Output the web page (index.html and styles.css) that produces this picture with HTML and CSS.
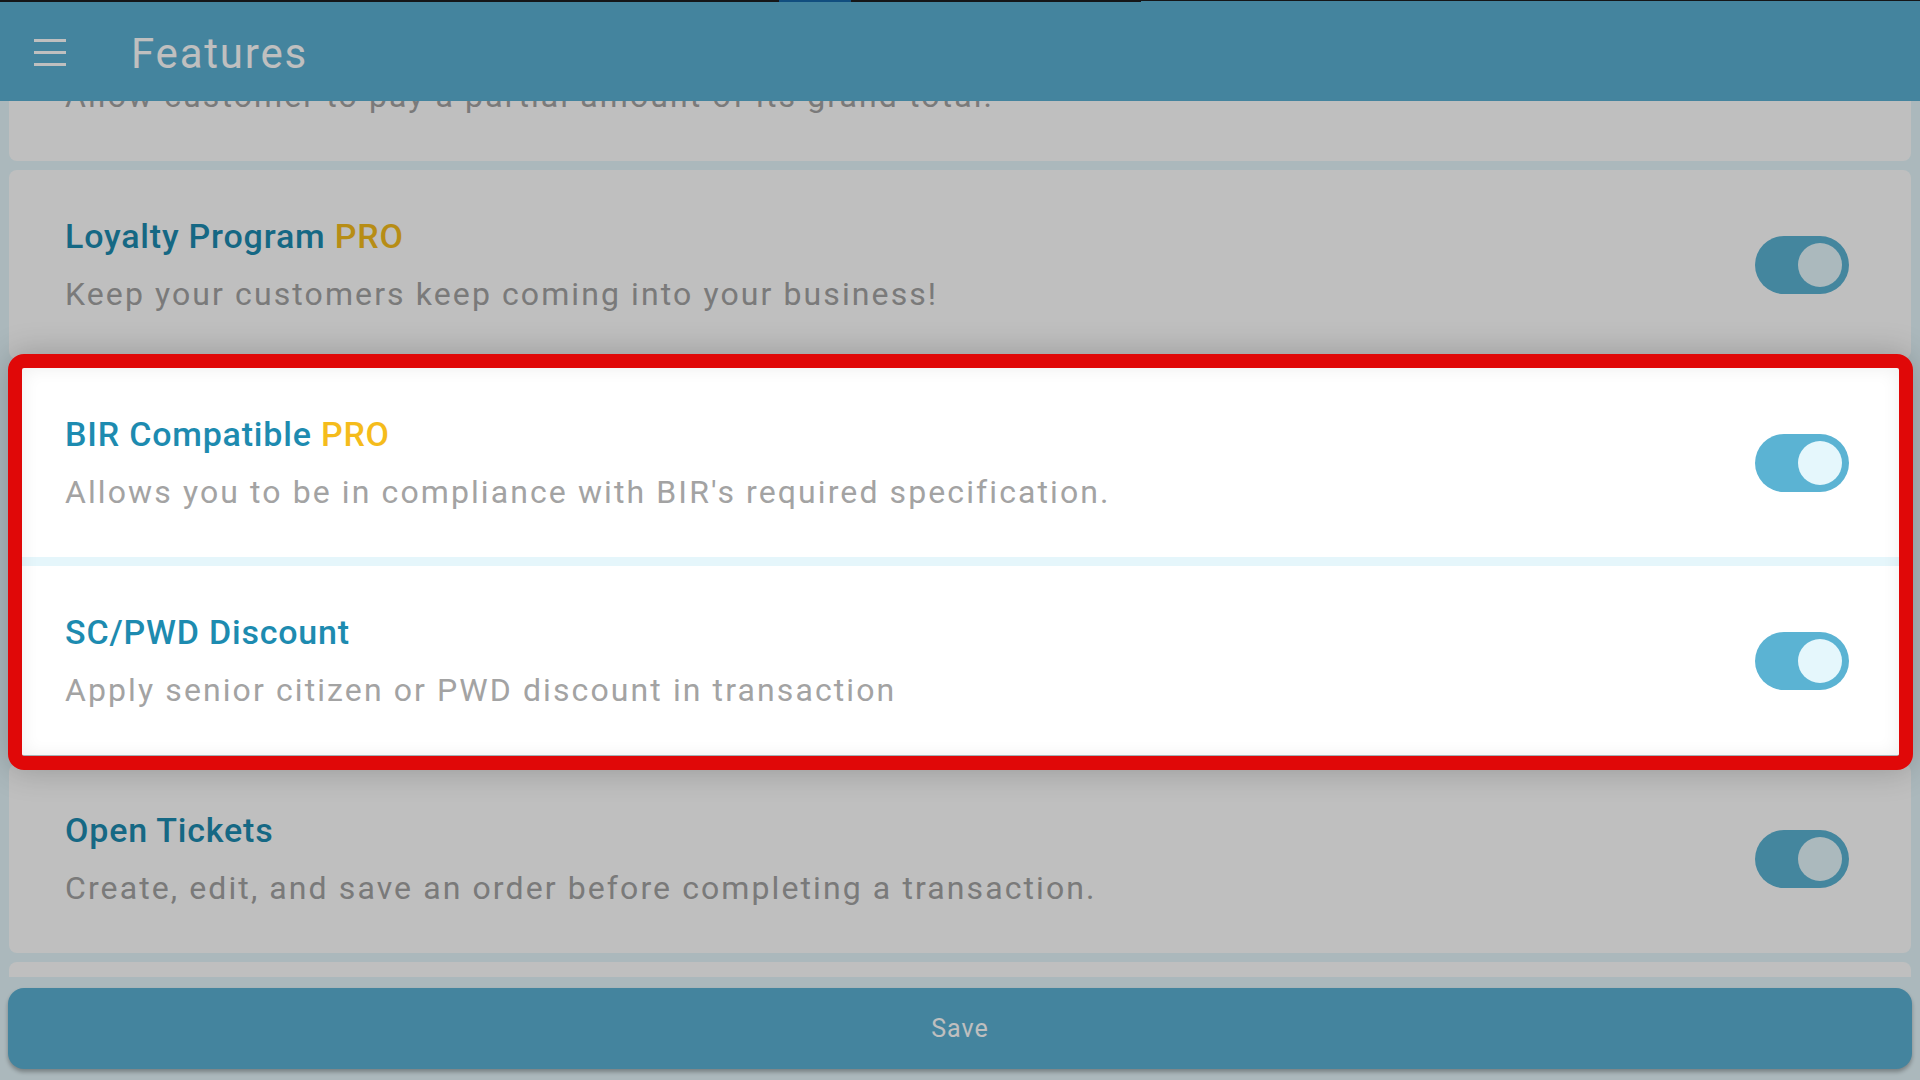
FILE: index.html
```html
<!DOCTYPE html>
<html lang="en">
<head>
<meta charset="utf-8">
<title>Features</title>
<link rel="stylesheet" href="styles.css">
</head>
<body>
<div class="app">
  <header class="topbar">
    <div class="statusline"></div>
    <div class="toolbar">
      <svg class="menu-icon" width="32" height="27" viewBox="0 0 32 27" aria-hidden="true">
        <rect x="0" y="0" width="32" height="3" fill="#ffffff"/>
        <rect x="0" y="12" width="32" height="3" fill="#ffffff"/>
        <rect x="0" y="24" width="32" height="3" fill="#ffffff"/>
      </svg>
      <h1 class="page-title">Features</h1>
    </div>
  </header>

  <main class="scroll">
    <div class="list">
      <section class="card">
        <div class="card-text">
          <div class="card-title">Partial Payment</div>
          <div class="card-desc">Allow customer to pay a partial amount of its grand total.</div>
        </div>
        <span class="switch on"><span class="knob"></span></span>
      </section>

      <section class="card">
        <div class="card-text">
          <div class="card-title">Loyalty Program <span class="pro">PRO</span></div>
          <div class="card-desc">Keep your customers keep coming into your business!</div>
        </div>
        <span class="switch on"><span class="knob"></span></span>
      </section>

      <div class="highlight">
        <section class="card">
          <div class="card-text">
            <div class="card-title">BIR Compatible <span class="pro">PRO</span></div>
            <div class="card-desc">Allows you to be in compliance with BIR's required specification.</div>
          </div>
          <span class="switch on"><span class="knob"></span></span>
        </section>
        <section class="card">
          <div class="card-text">
            <div class="card-title">SC/PWD Discount</div>
            <div class="card-desc">Apply senior citizen or PWD discount in transaction</div>
          </div>
          <span class="switch on"><span class="knob"></span></span>
        </section>
      </div>

      <section class="card">
        <div class="card-text">
          <div class="card-title">Open Tickets</div>
          <div class="card-desc">Create, edit, and save an order before completing a transaction.</div>
        </div>
        <span class="switch on"><span class="knob"></span></span>
      </section>

      <section class="card card-empty"></section>
    </div>
  </main>

  <footer class="footer">
    <button class="save-btn" type="button">Save</button>
  </footer>

  <div class="dim"></div>
</div>
</body>
</html>
```

FILE: styles.css
```css
* {
  box-sizing: border-box;
}

html, body {
  margin: 0;
  padding: 0;
}

body {
  width: 1920px;
  height: 1080px;
  overflow: hidden;
  background: #e5f6fb;
  font-family: Roboto, "Noto Sans", "Liberation Sans", sans-serif;
}

.app {
  position: relative;
  width: 1920px;
  height: 1080px;
  display: flex;
  flex-direction: column;
  background: #e5f6fb;
}

/* ---------- top bar ---------- */
.topbar {
  height: 101px;
  flex: none;
  background: #5bb0d3;
  display: flex;
  flex-direction: column;
}

.statusline {
  height: 2px;
  flex: none;
  background:
    linear-gradient(to right, #1c1e20 0 779px, #1769aa 779px 851px, #1c1e20 851px 1141px, transparent 1141px),
    linear-gradient(#1c1e20, #1c1e20) top left / 100% 1px no-repeat;
}

.toolbar {
  flex: 1;
  display: flex;
  align-items: center;
  padding-left: 34px;
  padding-top: 1px;
}

.menu-icon {
  display: block;
  flex: none;
}

.page-title {
  margin: 0 0 0 65px;
  font-size: 42px;
  font-weight: 400;
  letter-spacing: 1.8px;
  color: #ffffff;
  line-height: 1;
  padding-top: 4px;
}

/* ---------- scrolling list ---------- */
.scroll {
  flex: 1;
  position: relative;
  overflow: hidden;
  padding: 0 9px;
}

.list {
  margin-top: -129px;
  display: flex;
  flex-direction: column;
  gap: 9px;
}

.card {
  height: 189px;
  flex: none;
  background: #ffffff;
  border-radius: 8px;
  display: flex;
  align-items: center;
  justify-content: space-between;
  padding: 0 62px 0 56px;
}

.card-text {
  display: flex;
  flex-direction: column;
  gap: 16px;
}

.card-title {
  font-size: 34px;
  line-height: 42px;
  font-weight: 500;
  letter-spacing: 0.8px;
  color: #1d8bb0;
}

.pro {
  color: #f5bc1c;
}

.card-desc {
  font-size: 32px;
  line-height: 42px;
  font-weight: 400;
  letter-spacing: 2.1px;
  color: #a3a3a3;
}

.switch {
  position: relative;
  flex: none;
  width: 94px;
  height: 58px;
  border-radius: 29px;
  background: #9e9e9e;
  display: block;
}

.switch .knob {
  position: absolute;
  top: 7px;
  left: 7px;
  width: 44px;
  height: 44px;
  border-radius: 50%;
  background: #f2f2f2;
}

.switch.on {
  background: #5bb3d3;
}

.switch.on .knob {
  left: auto;
  right: 7px;
  background: #e5f7fc;
}

/* ---------- highlighted group ---------- */
.highlight {
  position: relative;
  z-index: 10;
  display: flex;
  flex-direction: column;
  gap: 9px;
  background: #e5f6fb;
}

.highlight::after {
  content: "";
  position: absolute;
  top: -14px;
  bottom: -15px;
  left: -1px;
  right: -2px;
  border: 14px solid #e00808;
  border-radius: 16px;
  box-shadow: 0 0 32px rgba(0, 0, 0, 0.22), inset 0 0 18px rgba(0, 0, 0, 0.07);
  pointer-events: none;
}

/* ---------- footer ---------- */
.footer {
  flex: none;
  padding: 11px 8px 11px 8px;
}

.save-btn {
  display: block;
  width: 100%;
  height: 81px;
  border: 0;
  border-radius: 16px;
  background: #5bb0d3;
  color: #ffffff;
  font-family: Roboto, "Noto Sans", "Liberation Sans", sans-serif;
  font-size: 25px;
  letter-spacing: 1px;
  box-shadow: 0 3px 4px rgba(0, 0, 0, 0.3);
}

/* ---------- dim overlay ---------- */
.dim {
  position: absolute;
  inset: 0;
  z-index: 5;
  background: rgba(0, 0, 0, 0.25);
  pointer-events: none;
}
```
